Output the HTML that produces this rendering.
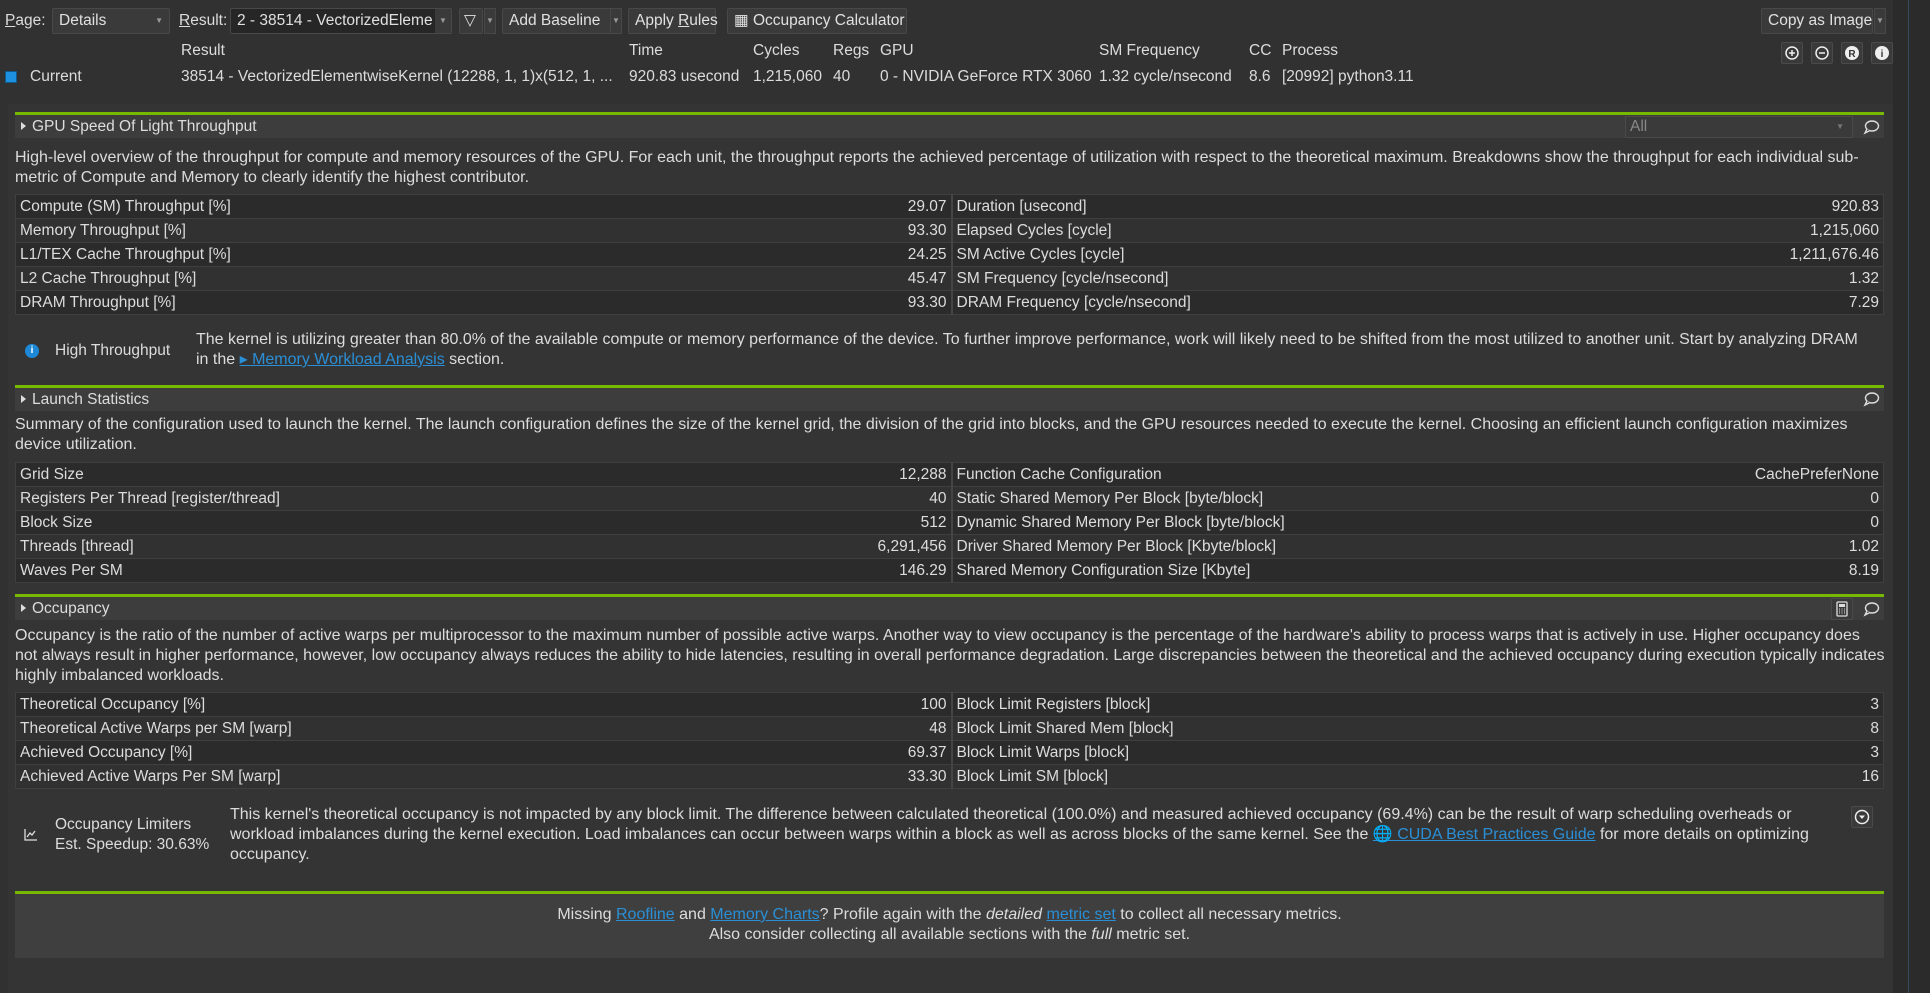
<!DOCTYPE html>
<html><head><meta charset="utf-8"><style>
*{box-sizing:border-box;margin:0;padding:0}
body{width:1930px;height:993px;background:#313131;color:#dcdcdc;font-family:"Liberation Sans",sans-serif;font-size:15.5px;position:relative;overflow:hidden}
.a{position:absolute;white-space:nowrap;line-height:20px}
.p{font-size:16px}
.btn{position:absolute;top:8px;height:26px;background:#3a3a3a;border:1px solid #484848;border-radius:2px;color:#e0e0e0;font-size:15.5px;line-height:24px;padding:0 6px;white-space:nowrap}
.dd{position:absolute;top:8px;height:26px;width:12px;background:#3a3a3a;border:1px solid #484848;color:#999;font-size:8px;line-height:24px;text-align:center}
.green{position:absolute;left:15px;width:1869px;height:3px;background:#76b900}
.hdr{position:absolute;left:15px;width:1869px;height:23px;background:#3d3d3d;line-height:23px;padding-left:6px}
.tri{display:inline-block;width:0;height:0;border-left:5px solid #ddd;border-top:4px solid transparent;border-bottom:4px solid transparent;margin-right:6px;vertical-align:1px}
.desc{position:absolute;left:15px;line-height:20px;white-space:nowrap;font-size:16px}
table{position:absolute;left:15px;width:1869px;border-collapse:collapse;border:1px solid #3f3f3f}
td{height:24px;padding:0 4px;border:none;border-bottom:1px solid #3f3f3f;background:#2b2b2b;white-space:nowrap;line-height:22px}
tr:nth-child(even) td{background:#313131}
td.l1{width:800px}
td.v{text-align:right;border-right:2px solid #454545;width:136px}
td.v2{text-align:right}
a{color:#2a8fd6;text-decoration:underline}
.ib{position:absolute;width:22px;height:22px;background:#3a3a3a;border:1px solid #4a4a4a;border-radius:2px}
</style></head><body>
<div style="position:absolute;left:1893px;top:0;width:37px;height:993px;background:#2b2b2b"></div>
<div style="position:absolute;left:1908px;top:0;width:1px;height:993px;background:#34495e"></div>
<div style="position:absolute;left:8px;top:104px;width:1885px;height:889px;background:#343434"></div>

<div class="a" style="left:5px;top:11px"><u>P</u>age:</div>
<div class="btn" style="left:52px;width:118px">Details<span style="position:absolute;right:6px;color:#999;font-size:8px">▼</span></div>
<div class="a" style="left:179px;top:11px"><u>R</u>esult:</div>
<div class="btn" style="left:230px;width:222px;background:#262626;overflow:hidden">2 - 38514 - VectorizedEleme<span style="position:absolute;right:0;top:0;width:16px;height:24px;background:#3a3a3a;color:#999;font-size:8px;text-align:center">▼</span></div>
<div class="btn" style="left:459px;width:24px;padding:0 4px">▽</div>
<div class="dd" style="left:484px">▼</div>
<div class="btn" style="left:502px;width:118px">Add Baseline</div>
<div class="dd" style="left:610px">▼</div>
<div class="btn" style="left:628px;width:88px">Apply <u>R</u>ules</div>
<div class="btn" style="left:727px;width:180px">▦ Occupancy Calculator</div>
<div class="btn" style="left:1761px;width:112px">Copy as Image</div>
<div class="dd" style="left:1874px">▼</div>

<div class="a" style="left:181px;top:41px">Result</div>
<div class="a" style="left:629px;top:41px">Time</div>
<div class="a" style="left:753px;top:41px">Cycles</div>
<div class="a" style="left:833px;top:41px">Regs</div>
<div class="a" style="left:880px;top:41px">GPU</div>
<div class="a" style="left:1099px;top:41px">SM Frequency</div>
<div class="a" style="left:1249px;top:41px">CC</div>
<div class="a" style="left:1282px;top:41px">Process</div>

<div style="position:absolute;left:5px;top:71px;width:12px;height:12px;background:#1e90e0;border:1px solid #0b5a90"></div>
<div class="a" style="left:30px;top:67px">Current</div>
<div class="a" style="left:181px;top:67px">38514 - VectorizedElementwiseKernel (12288, 1, 1)x(512, 1, ...</div>
<div class="a" style="left:629px;top:67px">920.83 usecond</div>
<div class="a" style="left:753px;top:67px">1,215,060</div>
<div class="a" style="left:833px;top:67px">40</div>
<div class="a" style="left:880px;top:67px">0 - NVIDIA GeForce RTX 3060</div>
<div class="a" style="left:1099px;top:67px">1.32 cycle/nsecond</div>
<div class="a" style="left:1249px;top:67px">8.6</div>
<div class="a" style="left:1282px;top:67px">[20992] python3.11</div>

<div class="ib" style="left:1781px;top:42px"><svg width="20" height="20"><circle cx="10" cy="10" r="6" stroke="#eee" stroke-width="1.5" fill="none"/><path d="M7 10H13M10 7V13" stroke="#eee" stroke-width="1.5"/></svg></div>
<div class="ib" style="left:1811px;top:42px"><svg width="20" height="20"><circle cx="10" cy="10" r="6" stroke="#eee" stroke-width="1.5" fill="none"/><path d="M7 10H13" stroke="#eee" stroke-width="1.5"/></svg></div>
<div class="ib" style="left:1841px;top:42px"><svg width="20" height="20"><circle cx="10" cy="10" r="7" fill="#eee"/><text x="10" y="14" font-size="10" font-weight="bold" text-anchor="middle" fill="#333" font-family="Liberation Sans">R</text></svg></div>
<div class="ib" style="left:1871px;top:42px"><svg width="20" height="20"><circle cx="10" cy="10" r="7" fill="#eee"/><text x="10" y="14" font-size="10" font-weight="bold" text-anchor="middle" fill="#333" font-family="Liberation Sans">i</text></svg></div>

<!-- Section 1 -->
<div class="green" style="top:112px"></div>
<div class="hdr" style="top:115px"><span class="tri"></span>GPU Speed Of Light Throughput</div>
<div style="position:absolute;left:1625px;top:116px;width:228px;height:22px;background:#3a3a3a;border:1px solid #4a4a4a;color:#888;line-height:20px;padding-left:4px">All<span style="position:absolute;right:8px;font-size:8px;color:#777">▼</span></div>
<svg style="position:absolute;left:1862px;top:118px" width="18" height="18"><ellipse cx="10" cy="8" rx="6.5" ry="5" stroke="#ddd" stroke-width="1.4" fill="none"/><path d="M5 11L3 15L8 12.5" stroke="#ddd" stroke-width="1.4" fill="#3d3d3d"/></svg>
<div class="desc" style="top:148px">High-level overview of the throughput for compute and memory resources of the GPU. For each unit, the throughput reports the achieved percentage of utilization with respect to the theoretical maximum. Breakdowns show the throughput for each individual sub-<br>metric of Compute and Memory to clearly identify the highest contributor.</div>
<table style="top:194px">
<tr><td class="l1">Compute (SM) Throughput [%]</td><td class="v">29.07</td><td>Duration [usecond]</td><td class="v2">920.83</td></tr>
<tr><td class="l1">Memory Throughput [%]</td><td class="v">93.30</td><td>Elapsed Cycles [cycle]</td><td class="v2">1,215,060</td></tr>
<tr><td class="l1">L1/TEX Cache Throughput [%]</td><td class="v">24.25</td><td>SM Active Cycles [cycle]</td><td class="v2">1,211,676.46</td></tr>
<tr><td class="l1">L2 Cache Throughput [%]</td><td class="v">45.47</td><td>SM Frequency [cycle/nsecond]</td><td class="v2">1.32</td></tr>
<tr><td class="l1">DRAM Throughput [%]</td><td class="v">93.30</td><td>DRAM Frequency [cycle/nsecond]</td><td class="v2">7.29</td></tr>
</table>
<div style="position:absolute;left:25px;top:344px;width:14px;height:14px;background:#1e88d8;border-radius:50%;color:#fff;font-size:10px;line-height:14px;text-align:center;font-weight:bold">i</div>
<div class="a" style="left:55px;top:341px">High Throughput</div>
<div class="a p" style="left:196px;top:330px">The kernel is utilizing greater than 80.0% of the available compute or memory performance of the device. To further improve performance, work will likely need to be shifted from the most utilized to another unit. Start by analyzing DRAM<br>in the <a>▸ Memory Workload Analysis</a> section.</div>

<!-- Section 2 -->
<div class="green" style="top:385px"></div>
<div class="hdr" style="top:388px"><span class="tri"></span>Launch Statistics</div>
<svg style="position:absolute;left:1862px;top:390px" width="18" height="18"><ellipse cx="10" cy="8" rx="6.5" ry="5" stroke="#ddd" stroke-width="1.4" fill="none"/><path d="M5 11L3 15L8 12.5" stroke="#ddd" stroke-width="1.4" fill="#3d3d3d"/></svg>
<div class="desc" style="top:415px">Summary of the configuration used to launch the kernel. The launch configuration defines the size of the kernel grid, the division of the grid into blocks, and the GPU resources needed to execute the kernel. Choosing an efficient launch configuration maximizes<br>device utilization.</div>
<table style="top:462px">
<tr><td class="l1">Grid Size</td><td class="v">12,288</td><td>Function Cache Configuration</td><td class="v2">CachePreferNone</td></tr>
<tr><td class="l1">Registers Per Thread [register/thread]</td><td class="v">40</td><td>Static Shared Memory Per Block [byte/block]</td><td class="v2">0</td></tr>
<tr><td class="l1">Block Size</td><td class="v">512</td><td>Dynamic Shared Memory Per Block [byte/block]</td><td class="v2">0</td></tr>
<tr><td class="l1">Threads [thread]</td><td class="v">6,291,456</td><td>Driver Shared Memory Per Block [Kbyte/block]</td><td class="v2">1.02</td></tr>
<tr><td class="l1">Waves Per SM</td><td class="v">146.29</td><td>Shared Memory Configuration Size [Kbyte]</td><td class="v2">8.19</td></tr>
</table>

<!-- Section 3 -->
<div class="green" style="top:594px"></div>
<div class="hdr" style="top:597px"><span class="tri"></span>Occupancy</div>
<div class="ib" style="left:1831px;top:598px"><svg width="20" height="20"><rect x="5" y="3" width="10" height="14" rx="1" stroke="#ddd" stroke-width="1.3" fill="none"/><rect x="7" y="5" width="6" height="3" fill="#ddd"/><path d="M7 10H8M9.5 10H10.5M12 10H13M7 12H8M9.5 12H10.5M12 12H13M7 14H8M9.5 14H10.5M12 14H13" stroke="#ddd"/></svg></div>
<svg style="position:absolute;left:1862px;top:600px" width="18" height="18"><ellipse cx="10" cy="8" rx="6.5" ry="5" stroke="#ddd" stroke-width="1.4" fill="none"/><path d="M5 11L3 15L8 12.5" stroke="#ddd" stroke-width="1.4" fill="#3d3d3d"/></svg>
<div class="desc" style="top:626px">Occupancy is the ratio of the number of active warps per multiprocessor to the maximum number of possible active warps. Another way to view occupancy is the percentage of the hardware's ability to process warps that is actively in use. Higher occupancy does<br>not always result in higher performance, however, low occupancy always reduces the ability to hide latencies, resulting in overall performance degradation. Large discrepancies between the theoretical and the achieved occupancy during execution typically indicates<br>highly imbalanced workloads.</div>
<table style="top:692px">
<tr><td class="l1">Theoretical Occupancy [%]</td><td class="v">100</td><td>Block Limit Registers [block]</td><td class="v2">3</td></tr>
<tr><td class="l1">Theoretical Active Warps per SM [warp]</td><td class="v">48</td><td>Block Limit Shared Mem [block]</td><td class="v2">8</td></tr>
<tr><td class="l1">Achieved Occupancy [%]</td><td class="v">69.37</td><td>Block Limit Warps [block]</td><td class="v2">3</td></tr>
<tr><td class="l1">Achieved Active Warps Per SM [warp]</td><td class="v">33.30</td><td>Block Limit SM [block]</td><td class="v2">16</td></tr>
</table>
<svg style="position:absolute;left:24px;top:828px" width="14" height="14"><path d="M1 1V12H13M3 9L6 5L8 7L11 3" stroke="#ddd" stroke-width="1.3" fill="none"/></svg>
<div class="a" style="left:55px;top:815px">Occupancy Limiters<br>Est. Speedup: 30.63%</div>
<div class="a p" style="left:230px;top:805px">This kernel's theoretical occupancy is not impacted by any block limit. The difference between calculated theoretical (100.0%) and measured achieved occupancy (69.4%) can be the result of warp scheduling overheads or<br>workload imbalances during the kernel execution. Load imbalances can occur between warps within a block as well as across blocks of the same kernel. See the <a>🌐 CUDA Best Practices Guide</a> for more details on optimizing<br>occupancy.</div>
<div class="ib" style="left:1851px;top:806px"><svg width="20" height="20"><circle cx="10" cy="10" r="6.5" stroke="#eee" stroke-width="1.5" fill="none"/><path d="M7 8.5H13L10 12Z" fill="#eee"/></svg></div>

<div class="green" style="top:891px"></div>
<div class="p" style="position:absolute;left:15px;top:894px;width:1869px;height:64px;background:#3f3f3f;text-align:center;line-height:20px;padding-top:11px">Missing <a>Roofline</a> and <a>Memory Charts</a>? Profile again with the <i>detailed</i> <a>metric set</a> to collect all necessary metrics.<br>Also consider collecting all available sections with the <i>full</i> metric set.</div>
</body></html>
